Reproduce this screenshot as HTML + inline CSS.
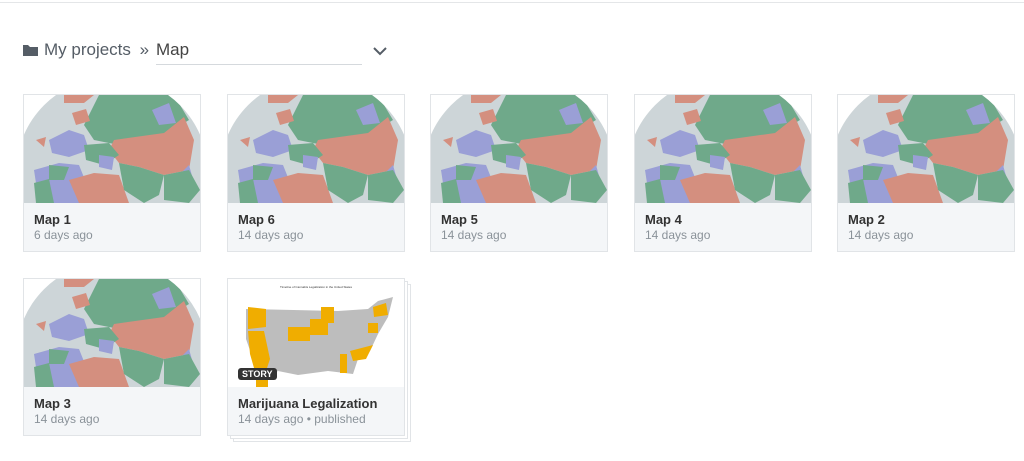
<!DOCTYPE html>
<html><head><meta charset="utf-8"><style>
html,body{margin:0;width:1024px;height:461px;overflow:hidden}
body{background:#fff;font-family:"Liberation Sans",sans-serif;position:relative}
.top{position:absolute;left:0;top:0;width:1024px;height:2px;border-bottom:1px solid #e4e6e8}
.bc{position:absolute;left:23px;top:40px;font-size:17px;color:#555d66}
.bc .in{position:absolute;left:133px;top:0;width:206px;height:24px;border-bottom:1px solid #d5d9dd;color:#444}
.card{position:absolute;width:176px;height:156px;border:1px solid #e1e4e7;background:#f4f6f8}
.card svg{position:absolute;left:0;top:0}
.t{position:absolute;left:10px;top:117px;font-size:13px;font-weight:bold;color:#333}
.d{position:absolute;left:10px;top:133px;font-size:12px;color:#8a9299}
</style></head><body>
<div class="top"></div>
<svg width="0" height="0" style="position:absolute"><defs>
<clipPath id="c"><circle cx="88" cy="78" r="96"/></clipPath>
<symbol id="g" viewBox="0 0 176 108">
<rect width="176" height="108" fill="#fff"/>
<circle cx="88" cy="78" r="96" fill="#cdd5d8"/>
<g clip-path="url(#c)">
<path d="M75 0 L150 0 L165 25 L140 40 L95 50 L70 45 L60 30 Z" fill="#6fa98a"/>
<path d="M90 45 L140 38 L160 22 L170 45 L165 75 L140 80 L115 72 L95 68 L85 55 Z" fill="#d48f7f"/>
<path d="M128 15 L145 8 L152 28 L135 30 Z M155 80 L165 70 L172 95 Z" fill="#9a9fd6"/>
<path d="M10 75 L35 68 L55 70 L65 95 L55 108 L15 108 Z" fill="#9a9fd6"/>
<path d="M45 85 L70 78 L95 80 L105 108 L55 108 Z" fill="#d48f7f"/>
<path d="M95 68 L115 72 L140 80 L135 100 L120 108 L100 95 Z" fill="#6fa98a"/>
<path d="M140 80 L165 75 L176 95 L165 108 L140 105 Z" fill="#6fa98a"/>
<path d="M25 45 L45 35 L60 40 L65 55 L45 62 L28 58 Z" fill="#9a9fd6"/>
<path d="M60 50 L85 48 L95 60 L80 70 L62 65 Z" fill="#6fa98a"/>
<path d="M75 60 L90 62 L88 75 L75 72 Z" fill="#9a9fd6"/>
<path d="M10 88 L25 84 L30 108 L12 108 Z" fill="#6fa98a"/>
<path d="M25 70 L45 72 L40 85 L25 85 Z" fill="#6fa98a"/>
<path d="M40 0 L70 0 L60 8 L40 8 Z M12 45 L22 42 L20 52 Z" fill="#d48f7f"/>
<path d="M48 18 L62 14 L66 26 L52 30 Z" fill="#d48f7f"/>
</g></symbol>
<symbol id="us" viewBox="0 0 176 108">
<rect width="176" height="108" fill="#fff"/>
<path d="M18 30 L110 32 L140 30 L150 22 L165 18 L160 38 L150 55 L142 72 L130 80 L125 95 L100 92 L70 96 L50 92 L35 100 L25 80 L18 60 Z" fill="#bdbdbd"/>
<path d="M20 28 L38 30 L38 48 L20 50 Z M20 52 L36 52 L42 80 L38 92 L28 96 L22 75 Z M60 48 L82 48 L82 62 L60 62 Z M82 40 L100 40 L100 56 L82 56 Z M93 28 L106 28 L106 44 L93 44 Z M145 28 L158 24 L160 36 L146 38 Z M140 44 L150 44 L150 54 L140 54 Z M122 72 L145 66 L138 80 L125 82 Z M112 75 L119 75 L119 94 L112 94 Z M28 96 L40 96 L40 108 L28 108 Z" fill="#f0ad00"/>
<text x="88" y="9" font-size="3" text-anchor="middle" fill="#333" font-family="Liberation Sans">Timeline of Cannabis Legalization in the United States</text>
</symbol>
</defs></svg>
<div class="bc"><svg width="15" height="12" viewBox="0 0 15 12" style="position:absolute;left:0;top:4px"><path d="M0 1h5l2 2h8v9H0z" fill="#555d66"/></svg><span style="position:absolute;left:21px;white-space:nowrap">My projects <span style="margin-left:4px">»</span></span><div class="in">Map</div>
<svg width="14" height="9" viewBox="0 0 14 9" style="position:absolute;left:350px;top:7px"><path d="M1 1l6 6 6-6" stroke="#555d66" stroke-width="2" fill="none"/></svg></div>

<div class="card" style="left:23px;top:94px"><svg width="176" height="108"><use href="#g"/></svg><div class="t">Map 1</div><div class="d">6 days ago</div></div>
<div class="card" style="left:227px;top:94px"><svg width="176" height="108"><use href="#g"/></svg><div class="t">Map 6</div><div class="d">14 days ago</div></div>
<div class="card" style="left:430px;top:94px"><svg width="176" height="108"><use href="#g"/></svg><div class="t">Map 5</div><div class="d">14 days ago</div></div>
<div class="card" style="left:634px;top:94px"><svg width="176" height="108"><use href="#g"/></svg><div class="t">Map 4</div><div class="d">14 days ago</div></div>
<div class="card" style="left:837px;top:94px"><svg width="176" height="108"><use href="#g"/></svg><div class="t">Map 2</div><div class="d">14 days ago</div></div>
<div class="card" style="left:23px;top:278px"><svg width="176" height="108"><use href="#g"/></svg><div class="t">Map 3</div><div class="d">14 days ago</div></div>
<div class="card" style="left:233px;top:284px;background:#fff"></div>
<div class="card" style="left:230px;top:281px;background:#fff"></div>
<div class="card" style="left:227px;top:278px"><svg width="176" height="108"><use href="#us"/></svg>
<div style="position:absolute;left:10px;top:89px;background:#333;color:#fff;font-size:9px;font-weight:bold;padding:1px 4px;border-radius:3px">STORY</div>
<div class="t">Marijuana Legalization</div><div class="d">14 days ago • published</div></div>
</body></html>
